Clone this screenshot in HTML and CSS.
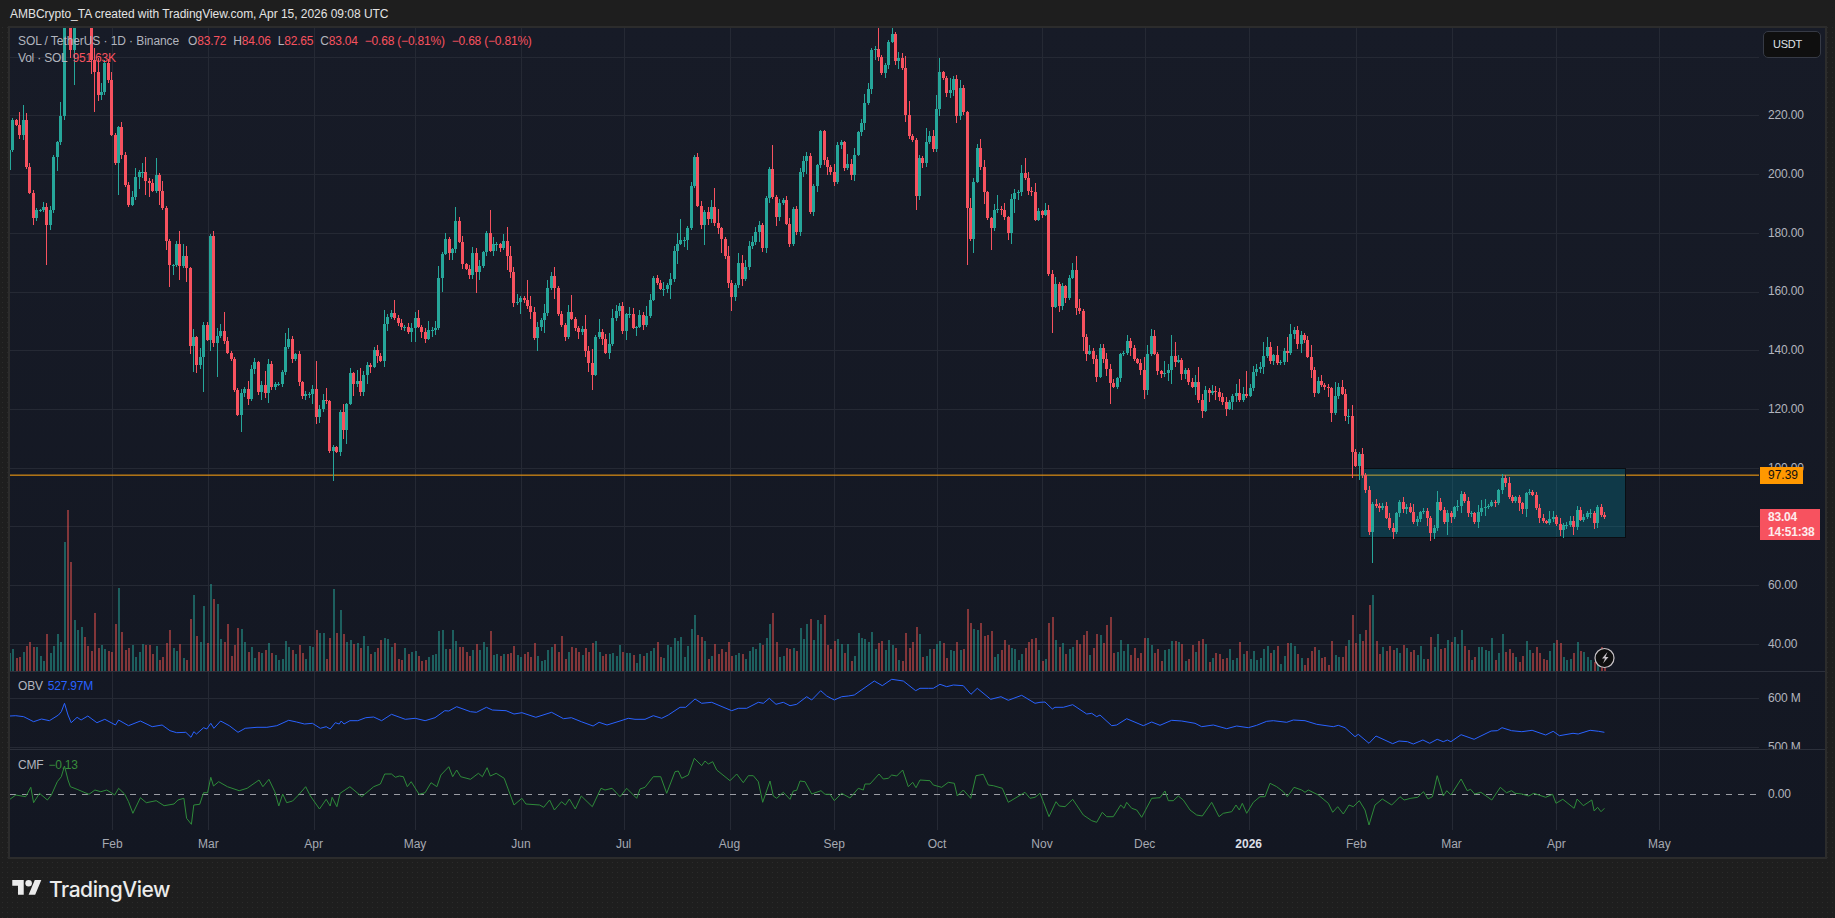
FILE: index.html
```html
<!DOCTYPE html>
<html lang="en">
<head>
<meta charset="utf-8">
<title>SOL / TetherUS chart</title>
<link rel="stylesheet" href="styles.css">
</head>
<body>
<div class="page">
  <header class="topbar">AMBCrypto_TA created with TradingView.com, Apr 15, 2026 09:08 UTC</header>
  <main class="chart">
    <section class="pane pane-main">
      <div class="plot" id="plot-main">
        <div class="legend">
          <div class="legend-row">
            <span class="title title-wide">SOL / TetherUS · 1D · Binance</span>
            <span class="item">O<b>83.72</b></span>
            <span class="item">H<b>84.06</b></span>
            <span class="item">L<b>82.65</b></span>
            <span class="item">C<b>83.04</b></span>
            <span class="item"><b>−0.68 (−0.81%)</b></span>
            <span class="item"><b>−0.68 (−0.81%)</b></span>
          </div>
          <div class="legend-row legend-tight">
            <span class="title">Vol · SOL</span>
            <span class="item"><b>951.63K</b></span>
          </div>
        </div>
      </div>
      <div class="axis axis-main">
        <span>220.00</span><span>200.00</span><span>180.00</span><span>160.00</span><span>140.00</span>
        <span>120.00</span><span>100.00</span><span></span><span>60.00</span><span>40.00</span>
      </div>
      <div class="currency">USDT</div>
      <div class="tag tag-level">97.39</div>
      <div class="tag tag-last">83.04<br>14:51:38</div>
    </section>
    <section class="pane pane-obv">
      <div class="plot" id="plot-obv">
        <div class="legend legend-sub"><div class="legend-row legend-tight"><span class="title">OBV</span><span class="item blue">527.97M</span></div></div>
      </div>
      <div class="axis axis-obv"><span>600 M</span><span>500 M</span></div>
    </section>
    <section class="pane pane-cmf">
      <div class="plot" id="plot-cmf">
        <div class="legend legend-sub legend-cmf"><div class="legend-row legend-tight"><span class="title">CMF</span><span class="item green">−0.13</span></div></div>
      </div>
      <div class="axis axis-cmf"><span>0.00</span></div>
    </section>
    <div class="timeaxis" id="timeaxis"></div>
  </main>
  <footer class="footer">
    <svg class="tv-mark" viewBox="0 0 36 22" aria-hidden="true"><path d="M14 18H7V7H0V0h14v18zM28 18h-8L27.500 0h8L28 18z"/><circle cx="20" cy="4" r="4"/></svg>
    <span class="tv-word">TradingView</span>
  </footer>
</div>
<script src="chart.js"></script>
</body>
</html>
```
FILE: styles.css
```css
* { box-sizing: border-box; }
html, body { margin: 0; padding: 0; background: #1e1e1e; }
body { font-family: "Liberation Sans", Arial, sans-serif; color: #b2b5be; }
.page {
  width: 1835px; height: 918px; overflow: hidden;
  display: flex; flex-direction: column;
  background-color: #1e1e1e;
  background-image: radial-gradient(#2b2b2b 0.6px, transparent 0.9px);
  background-size: 5px 5px;
}
.topbar {
  height: 26px; flex: none; padding: 8px 0 0 10px;
  background: #1e1e1e; color: #e3e3e3;
  font-size: 12px; line-height: 13px; letter-spacing: -0.03px; white-space: nowrap;
}
.chart {
  flex: none; width: 1819px; height: 833px; margin-left: 8px;
  border: 2px solid #2c2c2c;
  display: flex; flex-direction: column;
  background: linear-gradient(#171b27, #131722);
}
.pane { position: relative; display: flex; flex: none; overflow: hidden; border-bottom: 1px solid #2c303b; }
.pane-main { height: 644px; }
.pane-obv { height: 78px; }
.pane-cmf { height: 80px; border-bottom: 0; }
.plot { position: relative; width: 1749px; flex: none; overflow: hidden; }
.plot svg { display: block; }
.axis {
  flex: 1; display: grid; padding-left: 9px;
  font-size: 12px; letter-spacing: -0.15px; color: #b2b5be;
}
.axis span { display: flex; align-items: center; }
.axis-main { grid-auto-rows: 58.74px; padding-top: 57.9px; }
.axis-obv { grid-auto-rows: 48.4px; padding-top: 2.1px; }
.axis-cmf { grid-auto-rows: 24px; padding-top: 32px; }
.legend { position: absolute; left: 8px; top: 5px; font-size: 12px; line-height: 17px; }
.legend-sub { top: 6px; }
.legend-cmf { top: 7px; }
.legend-row { display: flex; gap: 7px; white-space: nowrap; letter-spacing: -0.2px; }
.legend-tight { gap: 5px; }
.title-wide { margin-right: 2px; letter-spacing: -0.08px; }
.item b { font-weight: 400; color: #f7525f; }
.item.blue { color: #2962ff; }
.item.green { color: #388e3c; }
.currency {
  position: absolute; left: 1753px; top: 3px; width: 58px; height: 27px;
  background: #0f0f0f; border: 1px solid #363a45; border-radius: 5px;
  color: #dfe1e6; font-size: 11px; letter-spacing: -0.25px; line-height: 25px; padding-left: 9px;
}
.tag { position: absolute; left: 1750px; font-size: 12px; text-align: left; padding-left: 8px; }
.tag-level { top: 439px; width: 43px; height: 17px; line-height: 17px; background: #ff9800; color: #0f0f0f; }
.tag-last { top: 481px; width: 60px; height: 31px; line-height: 15px; padding-top: 1px; padding-left: 8px; background: #f7525f; color: #fdecee; font-weight: 700; letter-spacing: -0.2px; }
.timeaxis { position: relative; height: 27px; flex: none; font-size: 12px; color: #a6a9b2; }
.timeaxis span { position: absolute; top: 7px; transform: translateX(-50%); }
.timeaxis .year { font-weight: 700; color: #dcdfe6; }
.footer { flex: 1; display: flex; align-items: flex-start; padding: 20px 0 0 12px; gap: 7px; }
.tv-mark { width: 30px; height: 18px; fill: #ebebeb; margin-top: 1px; }
.tv-word { font-family: Inter, "Liberation Sans", sans-serif; font-weight: 500; font-size: 21px; line-height: 22px; color: #ebebeb; letter-spacing: -0.45px; }
```
FILE: chart.js
```js
(function () {
  var X0 = 9.5, STEP = 3.408, N = 469;
  var GREEN = '#26a69a', RED = '#f7525f';
  var close = new Array(N), vol = new Array(N);
  function slot(x) { return Math.round((x - X0) / STEP); }
  function xOf(i) { return X0 + STEP * i; }
  function addC(ox, sx, list) {
    for (var i = 0; i < list.length; i += 2) {
      var s = slot(ox + list[i] / sx);
      if (s >= 0 && s < N) close[s] = list[i + 1];
    }
  }
  function addV(ox, sx, base, list) {
    for (var i = 0; i < list.length; i += 2) {
      var s = slot(ox + list[i] / sx);
      if (s >= 0 && s < N) vol[s] = (base - list[i + 1]) / 3;
    }
  }
  // closes read from the reference, as (crop x, page y)
  addC(0, 3, [33,150,40,120,53,125,62,135,72,120,82,167,95,182,104,218,113,210,125,210,133,207,145,225,154,210,163,157,175,142,185,116]);
  addC(0, 1, [65,-40,68.5,10,72,50,75,-10,78.5,-30,82,-70,85.5,-50,89,-5,92,60,95,72,99,95,102,92,105,63,109,80,112,135]);
  addC(0, 3, [350,163,359,127,368,155,380,185,389,205,400,197,410,177,421,172,431,172,440,181,451,183,461,191,472,175,482,191,491,208,502,241,511,265,522,265,532,244,542,266,552,256,562,268,574,346,583,337,592,365,603,357,613,325,624,340,634,236,643,343,655,336,665,331,676,341,685,353,695,359,706,390,716,415,727,393,737,389,747,399,757,369,767,362,778,392,788,385,799,393,808,364,818,387,829,384,840,384,850,372,859,347,868,339,880,359,890,354,901,382,911,396,920,394,931,394,941,389,952,417,968,400,982,401,992,451,1003,447,1012,452,1022,412,1033,430,1043,404,1055,373,1064,384,1075,381,1085,392,1094,375,1105,365,1115,367,1126,350,1135,356,1145,361,1156,324,1165,317,1177,313,1187,318,1195,323,1207,327,1217,327,1228,332,1238,328,1247,318,1258,327,1267,332,1278,339,1288,330,1298,330,1309,328,1318,278,1330,254,1340,239,1350,253,1360,249,1369,221,1381,242,1390,264,1402,269,1411,275,1420,253,1431,272,1441,266,1453,252,1462,233,1472,251,1482,244,1492,244,1503,248,1513,241,1522,256,1533,272,1543,303]);
  addC(500, 3, [53,302,63,298,73,300,84,306,94,312,105,338,115,327,124,320,135,313,145,288,156,276,166,288,175,314,186,325,196,337,207,312,217,319,228,328,238,332,247,329,258,351,268,363,280,375,288,337,298,332,310,339,319,353,330,344,340,318,350,311,360,306,370,331,382,314,391,314,401,328,411,327,421,315,433,325,442,316,451,300,463,278,472,283,484,289,493,289,503,285,514,279,523,251,535,244,544,240,556,240,565,228,574,186,586,157,595,206,607,225,616,212,625,219,636,207,646,223,658,228,667,239,676,256,688,283,697,297,708,285,718,263,727,279,738,267,748,246,760,242,770,232,779,225,790,248,799,198,810,169,820,197,829,217,841,203,851,200,862,224,871,244,883,209,892,232,901,172,913,161,921,156,933,212,942,186,952,165]);
  addC(620, 2.529, [510,131,518,160,527,167,535,172,543,182,552,145,560,142,570,168,578,164,586,175,595,155,604,132,613,123,621,103,630,89,638,50,647,49,656,57,664,73,672,65,680,42,689,34,698,61,706,58,716,68,725,115,732,136,742,140,751,196,760,158,768,163,775,142,785,136,793,149,802,109,810,72,818,78,828,93,836,90,846,79,856,116,861,88,871,112,880,208,889,239,897,182,905,148,915,167,922,192,932,218,941,228,948,210,955,209,965,204,975,217,983,233,992,199]);
  addC(1000, 3, [5,210,15,217,25,233,37,199,46,193,56,192,67,173,76,178,88,191,96,192,106,220,118,211,127,215,138,210,148,274,157,307,169,284,178,306,190,286,199,298,208,278,220,270,229,308,241,311,250,337,260,354,271,351,280,359,293,377,301,348,310,359,322,369,331,383,343,387,352,378,364,354,373,353,382,341,394,348,403,359,415,363,424,370,433,390,444,354,454,336,466,354,475,371,484,374,496,373,505,370,517,356,526,362,537,360,547,374,556,370,568,382,578,387,587,382,598,400,607,411,619,390,629,393,637,391,648,392,658,397,670,402,679,409,688,402,700,396,709,393,720,400,730,394,742,396,751,388,760,372,772,369,781,367,793,356,803,347,812,361,823,355,832,363,843,362,853,351,862,353,874,334,884,330,895,344,904,335,913,340,925,357,934,370,946,393,955,381,964,385,976,387,985,388,997,413,1006,396,1015,387,1027,394,1036,416,1047,416]);
  addC(1300, 2.93, [153,452,165,466,175,454,185,475,195,490,204,532,214,504,233,508,243,506,253,518,265,528,275,532,283,513,295,502,303,509,316,507,324,512,333,522,345,519,353,512,363,511,373,518,383,533,394,528,403,502,414,510,424,522,433,513,442,517,452,507,463,506,473,494,484,501,494,513,503,513,514,522,524,512,534,508,544,507,553,506,564,502,574,503,585,490,593,478,603,483,612,497,622,501,635,497,645,503,653,509,663,493,672,492,683,495,693,508,703,518,713,521,723,523,733,519,745,517,752,524,762,530,772,525,783,525,793,521,803,527,813,510,822,520,833,517,843,513,853,513,862,523,872,507,882,515,892,517]);

  // volume tops read from the reference
  addV(0, 3, 513, [33,460,38,447,48,475,60,472,69,457,81,438,90,426,102,441,111,441,120,468,132,483,141,402,153,459,162,438,171,402,183,426,192,126,204,30,213,186,222,360,234,390,243,381,255,411,264,438,273,453,285,339,294,444,306,435,315,447,324,453,336,456,345,372,357,264,366,396,375,450,387,444,396,435,408,471,417,456,429,432,438,435,447,435,459,462,468,438,480,480,489,471,498,429,510,390,519,444,531,453,540,432,552,474,561,480,570,357,582,285,591,408,600,426,612,318,621,429,633,252,642,297,651,312,663,417,672,426,684,372,693,468,702,435,714,384,723,387,735,426,744,456,756,441,765,474,774,456,786,459,795,450,807,429,816,459,825,465,837,480,846,477,858,423,867,441,876,450,888,462,897,435,909,459,918,477,927,438,939,441,948,390,960,399,969,399,978,477,990,414,999,267,1011,399,1020,330,1029,402,1041,426,1050,420,1062,432,1071,429,1080,444,1092,408,1101,438,1113,462,1122,456,1134,444,1143,420,1152,414,1164,417,1173,441,1185,429,1194,477,1203,480,1215,444,1224,462,1236,456,1245,453,1254,468,1266,483,1275,480,1287,471,1296,465,1305,462,1317,393,1326,390,1338,447,1347,447,1356,390,1368,423,1377,441,1389,441,1398,456,1410,468,1419,450,1428,432,1440,450,1449,426,1460,441,1470,393,1480,465,1491,462,1500,468,1512,462,1521,462,1530,459,1542,438,1551,465]);
  addV(520, 3, 243, [3,201,12,192,21,186,33,201,42,159,54,198,63,213,72,210,84,180,93,171,105,162,114,186,123,138,135,207,144,186,156,171,165,174,177,186,186,195,195,174,207,186,216,159,228,153,237,186,246,198,258,192,267,192,279,189,288,198,297,165,309,186,318,189,330,189,339,195,348,219,360,192,369,198,381,189,390,183,399,174,411,156,420,201,432,204,441,165,450,171,462,144,471,153,483,141,492,201,504,168,513,117,522,75,534,135,543,141,555,153,564,207,573,198,585,162,594,192,606,177,615,186,624,156,636,198,645,195,657,189,666,192,675,207,687,183,696,171,708,177,717,159,726,165,738,144,747,102,759,69,768,156,777,201,789,198,798,174,810,177,819,174,830,183,840,114,849,147,861,102,870,87,882,150,891,90,900,102,912,75,921,165,933,177,942,153,951,147,963,162,972,189,984,162,993,213,1002,198,1014,129,1023,144,1035,147,1044,156,1053,126,1065,177,1074,159,1086,153,1095,180,1104,150,1116,165,1125,174,1137,210,1146,213,1158,129,1167,174,1176,156,1188,111,1197,132,1209,201,1218,198,1227,177,1239,177,1248,162,1260,153,1269,159,1278,204,1290,180,1299,183,1311,156,1320,180,1329,177,1341,57,1350,99,1362,117,1371,120,1380,99,1392,138,1401,135,1413,123,1422,201,1431,192,1443,180,1452,150,1464,165,1473,174,1485,177,1494,210,1503,192,1515,174,1524,156,1533,147,1545,144,1554,180]);
  addV(1000, 3, 243, [114,180,126,213,135,207,147,99,156,81,165,150,177,171,186,159,198,192,207,177,216,171,228,150,237,162,249,135,258,123,267,195,279,174,288,132,297,135,309,159,318,105,330,81,339,189,351,186,360,150,372,183,381,162,390,195,402,174,411,204,423,189,432,144,441,144,453,165,462,189,474,177,483,213,492,180,504,177,513,153,525,153,534,156,543,162,555,213,564,207,576,165,585,186,594,153,606,147,615,162,627,216,636,204,645,189,657,192,666,207,678,204,687,177,696,210,708,204,717,156,729,192,738,183,750,207,759,183,768,210,780,204,789,177,801,168,810,189,819,180,831,168,840,222,852,198,861,159,870,159,882,168,891,192,903,204,912,225,921,204,933,183,942,171,954,180,963,204,972,201,984,225,993,153,1005,195,1014,201,1023,201,1035,168,1044,150,1056,75,1065,159,1077,132,1086,153,1095,120,1107,45,1116,15,1128,153,1137,192,1146,171,1158,183,1167,168,1179,180,1188,174,1197,189]);
  addV(1300, 2.93, 693, [299,615,310,625,320,635,330,630,340,645,350,618,360,657,370,657,380,590,390,622,401,582,410,628,420,625,430,600,438,605,450,590,459,612,471,570,480,618,490,630,500,660,510,652,521,620,530,620,540,630,550,632,559,594,570,660,580,640,591,582,601,636,610,628,620,640,630,650,640,665,650,648,659,603,670,630,680,640,689,620,700,640,709,658,720,660,730,634,740,610,749,600,759,610,770,650,780,660,790,656,800,640,810,606,820,632,830,636,840,650,850,660,860,665,870,668,880,622,890,665]);

  // fill gaps in the closes
  var last = -1, i, j;
  for (i = 0; i < N; i++) {
    if (close[i] !== undefined) {
      if (last >= 0) for (j = last + 1; j < i; j++) close[j] = close[last] + (close[i] - close[last]) * (j - last) / (i - last);
      last = i;
    }
  }
  for (i = last + 1; i < N; i++) close[i] = close[last];
  for (i = N - 1; i >= 0; i--) if (close[i] === undefined) close[i] = close[i + 1];

  // deterministic wick lengths
  var seed = 20260415;
  function rnd() {
    seed |= 0; seed = seed + 0x6D2B79F5 | 0;
    var t = Math.imul(seed ^ seed >>> 15, 1 | seed);
    t = t + Math.imul(t ^ t >>> 7, 61 | t) ^ t;
    return ((t ^ t >>> 14) >>> 0) / 4294967296;
  }
  function wick(scale, cap) { return Math.min(cap, 1 + -Math.log(1 - rnd()) * scale); }
  var hi = [], lo = [];
  for (i = 0; i < N; i++) {
    var o = i ? close[i - 1] : close[0] + 20;
    var box = xOf(i) > 1370;
    var sc = box ? 2.5 : 3.8, cap = box ? 8 : 14;
    hi[i] = Math.min(o, close[i]) - wick(sc, cap);
    lo[i] = Math.max(o, close[i]) + wick(sc, cap);
  }
  // long wicks read from the reference: x, high y (or 0), low y (or 0)
  [48,0,265, 119,0,243, 334,0,481, 242,0,432, 204,0,392, 194,0,372, 218,0,377, 317,361,0, 491,210,0, 477,0,293, 396,300,0, 289,328,0, 225,312,0, 180,231,0, 170,0,287, 117,0,195, 95,0,112, 75,0,85, 146,157,0, 157,158,0, 24,105,0, 34,0,225,
   593,0,390, 773,145,0, 695,155,0, 681,219,0, 572,295,0, 528,280,0, 555,267,0, 715,188,0, 705,0,245, 968,0,265, 974,0,253, 991,0,250, 1009,0,240, 920,0,200, 879,28,0, 893,27,0,
   1025,158,0, 1076,256,0, 1052,0,333, 1111,0,404, 1144,0,399, 1173,335,0, 1175,342,0, 1199,367,0, 1202,0,418, 1240,379,0, 1247,371,0, 1288,337,0, 1291,324,0, 1352,0,478, 1360,0,480,
   1373,0,563, 1437,491,0, 1448,0,535, 1502,474,0, 1434,0,539, 1560,0,536, 1602,504,0].forEach(function (v, k, arr) {
    if (k % 3) return;
    var s = slot(v);
    if (arr[k + 1]) hi[s] = arr[k + 1];
    if (arr[k + 2]) lo[s] = arr[k + 2];
  });

  var gridX = [112.3, 208.4, 313.6, 415, 521, 623.6, 729.5, 834.3, 937, 1042, 1144.7, 1248.7, 1356.3, 1451.5, 1556.3, 1659.4];
  function yPrice(p) { return 115.3 + (220 - p) * 2.937; }
  function vlines(y0, y1) { return gridX.map(function (x) { return 'M' + Math.round(x) + '.5 ' + y0 + 'V' + y1; }).join(''); }
  function hlines(ys) { return ys.map(function (y) { return 'M10 ' + (Math.round(y) + .5) + 'H1759'; }).join(''); }
  function svg(top, h, body) {
    return '<svg width="1749" height="' + h + '" viewBox="10 ' + top + ' 1749 ' + h + '" xmlns="http://www.w3.org/2000/svg">' + body + '</svg>';
  }
  function mount(id, html) {
    document.getElementById(id).insertAdjacentHTML('afterbegin', html);
  }

  // main pane
  var gridH = [];
  for (var p = 240; p >= 40; p -= 20) gridH.push(yPrice(p));
  var greenP = '', redP = '', vg = '', vr = '';
  for (i = 0; i < N; i++) {
    var op = i ? close[i - 1] : close[0] + 20, cl = close[i];
    var isUp = cl <= op;
    var x = xOf(i), bx = Math.round(x - 1.5), wx = bx + 1;
    var top = Math.round(Math.min(op, cl)), bot = Math.max(Math.round(Math.max(op, cl)), top + 1);
    var d = 'M' + wx + ' ' + Math.round(hi[i]) + 'h1V' + Math.round(lo[i]) + 'h-1zM' + bx + ' ' + top + 'h3V' + bot + 'h-3z';
    if (isUp) greenP += d; else redP += d;
    var h = vol[i] === undefined ? 10 : vol[i];
    var v = 'M' + (bx + 1) + ' ' + (671 - Math.round(h)) + 'h2v' + Math.round(h) + 'h-2z';
    if (isUp) vg += v; else vr += v;
  }
  mount('plot-main', svg(28, 643,
    '<path d="' + vlines(28, 671) + hlines(gridH) + '" stroke="#252934" stroke-width="1" fill="none"/>' +
    '<path d="' + vg + '" fill="#26a69a" fill-opacity=".5" shape-rendering="crispEdges"/>' +
    '<path d="' + vr + '" fill="#ef5350" fill-opacity=".5" shape-rendering="crispEdges"/>' +
    '<rect x="10" y="474.600" width="1749" height="1.100" fill="#f09a12"/>' +
    '<rect x="1360" y="468.500" width="265.500" height="69" fill="#009db4" fill-opacity=".25" stroke="#0a0e13" stroke-width="1"/>' +
    '<path d="' + greenP + '" fill="' + GREEN + '" shape-rendering="crispEdges"/>' +
    '<path d="' + redP + '" fill="' + RED + '" shape-rendering="crispEdges"/>' +
    '<circle cx="1604.500" cy="658" r="9.500" fill="#0f0f0f" stroke="#c9c4c8" stroke-width="1.200"/>' +
    '<path d="M1607.500 652l-5.500 6.500h3l-2 5 5.500-6.500h-3z" fill="#c9c4c8"/>'));

  // line panes: points are (crop x, crop y) of the reference
  function pts(ox, sx, oy, list) {
    var out = [];
    for (var k = 0; k < list.length; k += 2) out.push((ox + list[k] / sx).toFixed(1) + ' ' + (oy + list[k + 1] / 3).toFixed(1));
    return out;
  }
  var obv = [].concat(
    pts(0, 2.529, 660, [25,168,40,167,60,170,85,185,105,177,125,182,148,165,155,155,163,130,172,165,180,188,195,172,205,180,222,168,245,188,265,178,292,195,300,180,325,197,355,183,385,200,410,195,430,212,447,218,470,217,483,232,490,215,497,222,515,203,523,207,533,190,541,205,558,183,580,197,602,217,620,205,650,202,675,202,700,197,730,181,750,186,770,192,790,190,810,205,825,200,835,207,848,188,858,192,863,183,870,192,885,182,905,182,925,173,945,171,965,182,990,163,1025,178,1050,175,1075,182,1100,173,1125,152,1135,153,1155,140,1190,155,1205,157,1230,142,1245,150,1280,152,1300,162,1320,158,1355,172,1395,157,1425,176,1445,173,1470,185,1500,198,1515,187,1535,195]),
    pts(520, 3, 590, [300,393,325,385,345,388,375,388,400,377,425,385,445,375,480,352,497,352,525,327,545,340,575,337,635,362,655,355,680,355,715,337,730,340,748,325,768,343,790,337,810,347,830,343,860,320,875,330,902,302,920,318,943,330,965,320,985,318,1003,315,1063,273,1087,287,1115,268,1150,273,1187,302,1200,295,1225,295,1240,295,1260,283,1280,290,1300,285,1330,287,1353,313,1372,295,1412,328,1443,320,1465,331,1505,316,1545,340]),
    pts(1000, 3, 590, [120,337,135,336,157,357,165,352,190,352,218,344,260,372,275,370,290,380,300,375,335,407,350,405,380,386,430,407,455,396,480,406,515,391,545,393,585,400,605,410,640,405,680,416,710,408,745,413,770,406,800,394,820,392,860,397,880,390,915,392,950,403,1000,410,1015,406,1035,413,1065,440,1075,433,1107,460,1128,438,1178,461]),
    pts(1300, 2.93, 660, [290,243,315,245,332,252,360,240,380,250,402,238,420,245,432,240,442,245,472,224,510,238,560,213,578,212,592,203,620,212,650,215,680,211,720,225,742,214,760,227,800,220,815,222,850,211,875,214,892,217]));
  var cmf = [].concat(
    pts(0, 2.529, 660, [25,418,40,405,65,410,78,382,85,428,100,400,120,420,130,405,145,365,155,350,163,318,172,360,178,380,195,388,215,398,225,403,240,390,255,395,270,390,290,405,300,385,315,402,325,425,336,460,355,413,370,428,395,422,415,437,440,432,450,420,465,415,472,475,484,493,490,435,505,433,515,398,525,398,533,352,540,378,553,365,575,380,605,392,625,385,655,360,665,380,680,358,695,395,705,438,715,402,725,428,740,423,755,405,773,380,785,408,808,447,825,418,835,438,840,412,852,440,860,400,885,380,915,410,945,380,962,372,973,342,990,342,1000,352,1010,348,1020,350,1030,380,1040,365,1060,403,1075,398,1090,368,1105,380,1115,345,1135,320,1145,350,1155,330,1165,350,1190,358,1210,340,1220,350,1232,323,1240,348,1255,340,1275,355,1300,435,1320,415,1330,432,1365,435,1375,442,1390,420,1402,450,1420,425,1430,435,1440,417,1455,447,1470,408,1498,440,1520,385,1530,390,1548,385]),
    pts(520, 3, 590, [300,620,320,595,350,625,360,597,375,592,400,560,422,560,440,610,465,545,475,543,485,565,505,555,523,505,545,527,555,513,565,522,578,515,590,540,630,572,650,552,670,578,685,557,700,557,715,575,728,637,750,573,760,618,770,625,790,607,810,628,820,603,830,601,840,573,855,575,875,612,903,602,915,613,930,613,943,632,965,610,990,624,1015,595,1030,600,1035,582,1050,582,1077,552,1090,567,1105,565,1115,555,1130,558,1148,540,1165,590,1178,577,1188,593,1200,570,1230,572,1240,585,1265,592,1285,577,1303,580,1312,618,1330,600,1352,625,1368,557,1390,553,1405,585,1420,587,1447,595,1465,637,1515,607,1530,625,1545,622]),
    pts(1000, 3, 590, [120,610,130,635,147,680,168,635,178,648,195,650,218,628,250,675,275,692,290,697,307,667,320,680,340,680,362,645,372,655,380,637,395,655,410,660,425,682,455,625,480,623,495,603,505,632,520,632,535,618,550,630,570,660,590,675,607,678,635,637,657,680,670,670,695,665,708,645,718,660,727,640,740,670,760,637,780,620,795,620,810,580,830,590,850,605,862,620,882,592,905,600,915,607,925,600,955,615,985,640,998,667,1013,650,1030,672,1047,645,1060,650,1078,632,1095,660,1107,705,1125,645,1147,627,1175,645]),
    pts(1300, 2.93, 660, [293,410,305,420,325,415,345,412,362,395,375,417,388,410,402,347,420,408,430,392,442,405,472,357,490,392,500,388,512,402,530,397,562,420,587,382,605,398,620,392,630,400,650,402,670,408,685,400,720,412,740,403,750,430,770,418,803,445,812,417,830,437,855,420,862,453,872,442,882,455,892,445]));
  function line(points, color) {
    return '<path d="M' + points.join('L') + '" fill="none" stroke="' + color + '" stroke-width="1" stroke-linejoin="round"/>';
  }
  mount('plot-obv', svg(672, 77,
    '<path d="' + vlines(672, 750) + hlines([698.3, 746.7]) + '" stroke="#252934" fill="none"/>' + line(obv, '#2962ff')));
  mount('plot-cmf', svg(750, 80,
    '<path d="' + vlines(750, 830) + '" stroke="#252934" fill="none"/>' +
    '<path d="M10 794.500H1759" stroke="#9a9ca3" stroke-dasharray="6 6" fill="none"/>' + line(cmf, '#2e8b3a')));

  // time axis
  var labels = ['Feb','Mar','Apr','May','Jun','Jul','Aug','Sep','Oct','Nov','Dec','2026','Feb','Mar','Apr','May'];
  var ta = document.getElementById('timeaxis');
  labels.forEach(function (t, k) {
    var s = document.createElement('span');
    s.textContent = t;
    if (t === '2026') s.className = 'year';
    s.style.left = (gridX[k] - 10) + 'px';
    ta.appendChild(s);
  });
})();
```
